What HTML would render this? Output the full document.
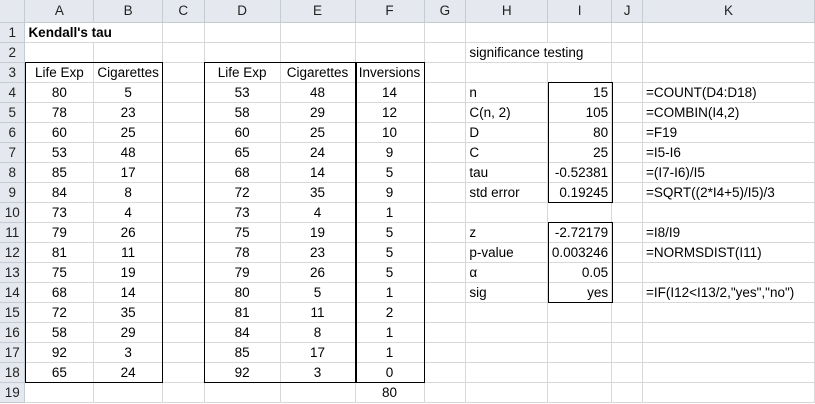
<!DOCTYPE html><html><head><style>
body{margin:0;width:815px;height:404px;overflow:hidden;background:#fff;font-family:"Liberation Sans",Arial,sans-serif;font-size:13.5px;color:#000}
table{border-collapse:collapse;table-layout:fixed;position:absolute;left:0;top:0}
td{height:19px;border-right:1px solid #d8d8d8;border-bottom:1px solid #d8d8d8;padding:0 3px;white-space:nowrap;overflow:visible;line-height:19px}
tr.h td{height:22px;background:#e5e9ef;border-color:#c5cbd3;text-align:center;color:#222;line-height:22px}
td.r{background:#e5e9ef;border-color:#c5cbd3;text-align:center;color:#222;padding:0}
.c{text-align:center}.rt{text-align:right}
.b{position:absolute;border:1px solid #000;box-sizing:border-box}
</style></head><body>
<table>
<colgroup><col style="width:25px"><col style="width:69px"><col style="width:68px"><col style="width:42px"><col style="width:76px"><col style="width:75px"><col style="width:69px"><col style="width:42px"><col style="width:82px"><col style="width:64px"><col style="width:31px"><col style="width:172px"></colgroup>
<tr class="h"><td style="background:#e5e9ef"></td><td>A</td><td>B</td><td>C</td><td>D</td><td>E</td><td>F</td><td>G</td><td>H</td><td>I</td><td>J</td><td>K</td></tr>
<tr><td class="r">1</td><td colspan="2" style="font-weight:bold">Kendall's tau</td><td></td><td></td><td></td><td></td><td></td><td></td><td></td><td></td><td></td></tr>
<tr><td class="r">2</td><td></td><td></td><td></td><td></td><td></td><td></td><td></td><td colspan="2">significance testing</td><td></td><td></td></tr>
<tr><td class="r">3</td><td class="c">Life Exp</td><td class="c">Cigarettes</td><td></td><td class="c">Life Exp</td><td class="c">Cigarettes</td><td class="c">Inversions</td><td></td><td></td><td></td><td></td><td></td></tr>
<tr><td class="r">4</td><td class="c">80</td><td class="c">5</td><td></td><td class="c">53</td><td class="c">48</td><td class="c">14</td><td></td><td>n</td><td class="rt">15</td><td></td><td>=COUNT(D4:D18)</td></tr>
<tr><td class="r">5</td><td class="c">78</td><td class="c">23</td><td></td><td class="c">58</td><td class="c">29</td><td class="c">12</td><td></td><td>C(n, 2)</td><td class="rt">105</td><td></td><td>=COMBIN(I4,2)</td></tr>
<tr><td class="r">6</td><td class="c">60</td><td class="c">25</td><td></td><td class="c">60</td><td class="c">25</td><td class="c">10</td><td></td><td>D</td><td class="rt">80</td><td></td><td>=F19</td></tr>
<tr><td class="r">7</td><td class="c">53</td><td class="c">48</td><td></td><td class="c">65</td><td class="c">24</td><td class="c">9</td><td></td><td>C</td><td class="rt">25</td><td></td><td>=I5-I6</td></tr>
<tr><td class="r">8</td><td class="c">85</td><td class="c">17</td><td></td><td class="c">68</td><td class="c">14</td><td class="c">5</td><td></td><td>tau</td><td class="rt">-0.52381</td><td></td><td>=(I7-I6)/I5</td></tr>
<tr><td class="r">9</td><td class="c">84</td><td class="c">8</td><td></td><td class="c">72</td><td class="c">35</td><td class="c">9</td><td></td><td>std error</td><td class="rt">0.19245</td><td></td><td>=SQRT((2*I4+5)/I5)/3</td></tr>
<tr><td class="r">10</td><td class="c">73</td><td class="c">4</td><td></td><td class="c">73</td><td class="c">4</td><td class="c">1</td><td></td><td></td><td></td><td></td><td></td></tr>
<tr><td class="r">11</td><td class="c">79</td><td class="c">26</td><td></td><td class="c">75</td><td class="c">19</td><td class="c">5</td><td></td><td>z</td><td class="rt">-2.72179</td><td></td><td>=I8/I9</td></tr>
<tr><td class="r">12</td><td class="c">81</td><td class="c">11</td><td></td><td class="c">78</td><td class="c">23</td><td class="c">5</td><td></td><td>p-value</td><td class="rt">0.003246</td><td></td><td>=NORMSDIST(I11)</td></tr>
<tr><td class="r">13</td><td class="c">75</td><td class="c">19</td><td></td><td class="c">79</td><td class="c">26</td><td class="c">5</td><td></td><td>α</td><td class="rt">0.05</td><td></td><td></td></tr>
<tr><td class="r">14</td><td class="c">68</td><td class="c">14</td><td></td><td class="c">80</td><td class="c">5</td><td class="c">1</td><td></td><td>sig</td><td class="rt">yes</td><td></td><td>=IF(I12&lt;I13/2,"yes","no")</td></tr>
<tr><td class="r">15</td><td class="c">72</td><td class="c">35</td><td></td><td class="c">81</td><td class="c">11</td><td class="c">2</td><td></td><td></td><td></td><td></td><td></td></tr>
<tr><td class="r">16</td><td class="c">58</td><td class="c">29</td><td></td><td class="c">84</td><td class="c">8</td><td class="c">1</td><td></td><td></td><td></td><td></td><td></td></tr>
<tr><td class="r">17</td><td class="c">92</td><td class="c">3</td><td></td><td class="c">85</td><td class="c">17</td><td class="c">1</td><td></td><td></td><td></td><td></td><td></td></tr>
<tr><td class="r">18</td><td class="c">65</td><td class="c">24</td><td></td><td class="c">92</td><td class="c">3</td><td class="c">0</td><td></td><td></td><td></td><td></td><td></td></tr>
<tr><td class="r">19</td><td></td><td></td><td></td><td></td><td></td><td class="c">80</td><td></td><td></td><td></td><td></td><td></td></tr>
</table>
<div class="b" style="left:25px;top:62px;width:138px;height:321px"></div>
<div class="b" style="left:204px;top:62px;width:221px;height:321px"></div>
<div class="b" style="left:355px;top:62px;width:1px;height:321px"></div>
<div class="b" style="left:548px;top:82px;width:65px;height:121px"></div>
<div class="b" style="left:548px;top:222px;width:65px;height:81px"></div>
</body></html>
